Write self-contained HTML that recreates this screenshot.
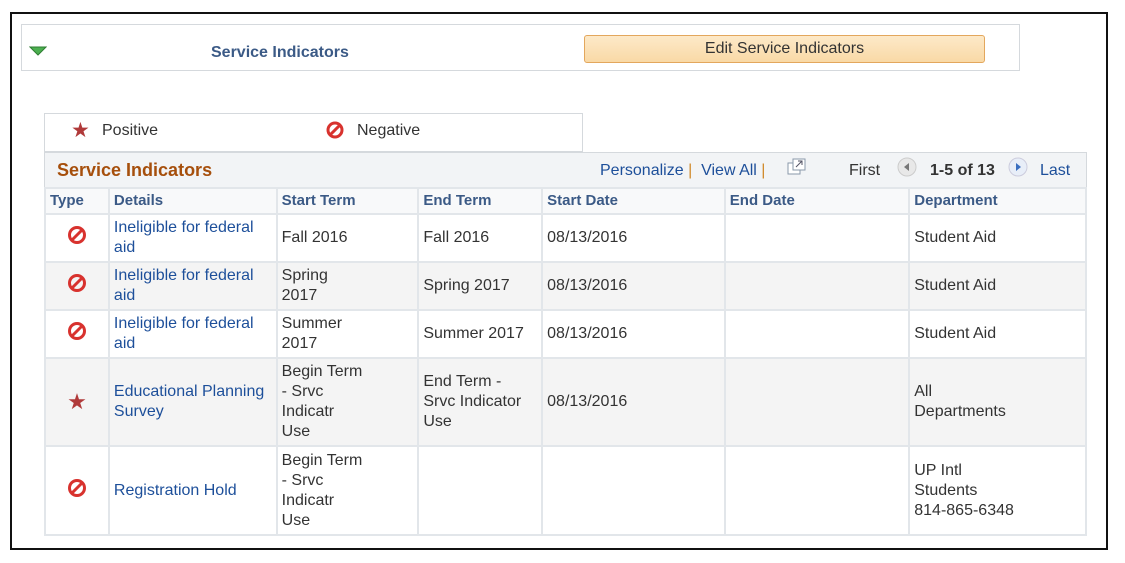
<!DOCTYPE html>
<html><head><style>
*{margin:0;padding:0;box-sizing:border-box}
body{width:1125px;height:563px;background:#fff;font-family:"Liberation Sans",Arial,sans-serif;font-size:16px;color:#333;position:relative;overflow:hidden}
.a{position:absolute}
.lnk{color:#1d4f9a}
table{position:absolute;left:44px;top:187px;border-collapse:collapse;width:1043px}
td,th{border:2px solid #e2e6ea;vertical-align:middle;text-align:left;padding:0 4px;line-height:20px}
th{height:26px;font-weight:bold;color:#3b5a86;background:#f8f9fa;font-size:15px}
tr.g td{background:#f4f4f4}
.ic{text-align:center}
</style></head><body>
<div class="a" style="left:10px;top:12px;width:1098px;height:538px;border:2px solid #111"></div>
<div class="a" style="left:21px;top:24px;width:999px;height:47px;border:1px solid #d5d9dd"></div>
<svg class="a" style="left:29px;top:46px" width="18" height="10"><polygon points="1,1 17,1 9,9" fill="#4caf50" stroke="#2e7d32" stroke-width="1"/></svg>
<div class="a" style="left:211px;top:44px;font-weight:bold;color:#3b5a86;font-size:16px">Service Indicators</div>
<div class="a" style="left:584px;top:35px;width:401px;height:28px;border:1px solid #e3a75d;border-radius:3px;background:linear-gradient(#fde9c8,#f9d9a6);text-align:center;line-height:26px;color:#333">Edit Service Indicators</div>
<div class="a" style="left:44px;top:113px;width:539px;height:39px;border:1px solid #d5d9dd"></div>
<div class="a" style="left:71px;top:118px;color:#b03a3a;font-size:21px">★</div>
<div class="a" style="left:102px;top:122px">Positive</div>
<svg class="a" style="left:326px;top:121px" width="18" height="18"><circle cx="9" cy="9" r="7" fill="none" stroke="#d8322e" stroke-width="3"/><line x1="4" y1="14" x2="14" y2="4" stroke="#d8322e" stroke-width="3"/></svg>
<div class="a" style="left:357px;top:122px">Negative</div>
<div class="a" style="left:44px;top:152px;width:1043px;height:36px;background:#f2f4f6;border:1px solid #d5d9dd"></div>
<div class="a" style="left:57px;top:160px;font-weight:bold;color:#a64f0c;font-size:18px">Service Indicators</div>
<div class="a" style="left:600px;top:162px"><span class="lnk">Personalize</span> <span style="color:#d08a2a">|</span>&nbsp; <span class="lnk">View All</span> <span style="color:#d08a2a">|</span></div>
<svg class="a" style="left:787px;top:158px" width="20" height="18"><rect x="1" y="5" width="12" height="11" fill="#fff" stroke="#8a99aa"/><rect x="6" y="1" width="12" height="11" fill="#fff" stroke="#8a99aa"/><path d="M9 9 L15 3 M11 3 H15 V7" stroke="#556" fill="none"/></svg>
<div class="a" style="left:849px;top:162px">First</div>
<svg class="a" style="left:897px;top:157px" width="20" height="20"><circle cx="10" cy="10" r="9" fill="#e8e8e8" stroke="#ccc"/><polygon points="12,6 12,14 7,10" fill="#777"/></svg>
<div class="a" style="left:930px;top:162px;font-weight:bold">1-5 of 13</div>
<svg class="a" style="left:1008px;top:157px" width="20" height="20"><circle cx="10" cy="10" r="9" fill="#e8eef8" stroke="#ccd"/><polygon points="8,6 8,14 13,10" fill="#3a6fc0"/></svg>
<div class="a lnk" style="left:1040px;top:162px">Last</div>
<table>
<colgroup><col style="width:64px"><col style="width:168px"><col style="width:142px"><col style="width:124px"><col style="width:183px"><col style="width:185px"><col style="width:177px"></colgroup>
<tr><th>Type</th><th>Details</th><th>Start Term</th><th>End Term</th><th>Start Date</th><th>End Date</th><th>Department</th></tr>
<tr style="height:48px"><td class="ic"><svg width="20" height="20"><circle cx="10" cy="10" r="7.5" fill="none" stroke="#d8322e" stroke-width="3"/><line x1="5" y1="15" x2="15" y2="5" stroke="#d8322e" stroke-width="3"/></svg></td><td class="lnk">Ineligible for federal aid</td><td>Fall 2016</td><td>Fall 2016</td><td>08/13/2016</td><td></td><td>Student Aid</td></tr>
<tr class="g" style="height:48px"><td class="ic"><svg width="20" height="20"><circle cx="10" cy="10" r="7.5" fill="none" stroke="#d8322e" stroke-width="3"/><line x1="5" y1="15" x2="15" y2="5" stroke="#d8322e" stroke-width="3"/></svg></td><td class="lnk">Ineligible for federal aid</td><td>Spring<br>2017</td><td>Spring 2017</td><td>08/13/2016</td><td></td><td>Student Aid</td></tr>
<tr style="height:48px"><td class="ic"><svg width="20" height="20"><circle cx="10" cy="10" r="7.5" fill="none" stroke="#d8322e" stroke-width="3"/><line x1="5" y1="15" x2="15" y2="5" stroke="#d8322e" stroke-width="3"/></svg></td><td class="lnk">Ineligible for federal aid</td><td>Summer<br>2017</td><td>Summer 2017</td><td>08/13/2016</td><td></td><td>Student Aid</td></tr>
<tr class="g" style="height:88px"><td class="ic" style="color:#b03a3a;font-size:22px">★</td><td class="lnk">Educational Planning Survey</td><td>Begin Term<br>- Srvc<br>Indicatr<br>Use</td><td>End Term -<br>Srvc Indicator<br>Use</td><td>08/13/2016</td><td></td><td>All<br>Departments</td></tr>
<tr style="height:89px"><td class="ic"><svg width="20" height="20"><circle cx="10" cy="10" r="7.5" fill="none" stroke="#d8322e" stroke-width="3"/><line x1="5" y1="15" x2="15" y2="5" stroke="#d8322e" stroke-width="3"/></svg></td><td class="lnk">Registration Hold</td><td>Begin Term<br>- Srvc<br>Indicatr<br>Use</td><td></td><td></td><td></td><td>UP Intl<br>Students<br>814-865-6348</td></tr>
</table>
</body></html>
